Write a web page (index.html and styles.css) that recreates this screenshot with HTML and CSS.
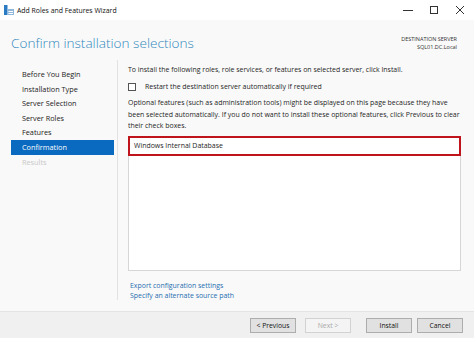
FILE: index.html
```html
<!DOCTYPE html>
<html>
<head>
<meta charset="utf-8">
<link rel="stylesheet" href="styles.css">
</head>
<body>
<div class="window">
  <div class="titlebar">
    <svg class="appicon" width="10" height="10" viewBox="0 0 10 10">
      <rect x="0" y="0" width="3.5" height="10" fill="#2a7bc4"/>
      <rect x="3.5" y="4" width="6.5" height="6" fill="#8fb7dc"/>
      <rect x="4.5" y="6" width="4.5" height="1" fill="#ffffff"/>
      <rect x="4.5" y="8" width="4.5" height="1" fill="#ffffff"/>
    </svg>
    <span class="title">Add Roles and Features Wizard</span>
    <div class="controls">
      <svg width="10" height="10" viewBox="0 0 10 10"><line x1="0" y1="5.5" x2="10" y2="5.5" stroke="#333" stroke-width="1"/></svg>
      <svg width="10" height="10" viewBox="0 0 10 10"><rect x="1.5" y="1.5" width="7" height="7" fill="none" stroke="#333" stroke-width="1"/></svg>
      <svg width="10" height="10" viewBox="0 0 10 10"><path d="M1 1 L9 9 M9 1 L1 9" stroke="#333" stroke-width="1"/></svg>
    </div>
  </div>
  <div class="header">
    <h1 class="heading">Confirm installation selections</h1>
    <div class="dest">
      <div>DESTINATION SERVER</div>
      <div>SQL01.DC.Local</div>
    </div>
  </div>
  <div class="main">
    <nav class="nav">
      <div class="navitem">Before You Begin</div>
      <div class="navitem">Installation Type</div>
      <div class="navitem">Server Selection</div>
      <div class="navitem">Server Roles</div>
      <div class="navitem">Features</div>
      <div class="navitem active">Confirmation</div>
      <div class="navitem disabled">Results</div>
    </nav>
    <div class="content">
      <p class="intro">To install the following roles, role services, or features on selected server, click Install.</p>
      <label class="check"><span class="box"></span>Restart the destination server automatically if required</label>
      <p class="note">Optional features (such as administration tools) might be displayed on this page because they have been selected automatically. If you do not want to install these optional features, click Previous to clear their check boxes.</p>
      <div class="list">
        <div class="item">Windows Internal Database</div>
      </div>
      <div class="links">
        <a>Export configuration settings</a>
        <a>Specify an alternate source path</a>
      </div>
    </div>
  </div>
  <div class="footer">
    <button class="btn">&lt; Previous</button>
    <button class="btn" disabled>Next &gt;</button>
    <button class="btn gap">Install</button>
    <button class="btn">Cancel</button>
  </div>
</div>
</body>
</html>
```
FILE: styles.css
```css
* { box-sizing: border-box; }
html, body { margin: 0; padding: 0; }
body {
  width: 474px;
  height: 338px;
  overflow: hidden;
  font-family: "Open Sans", "Noto Sans", sans-serif;
  color: #1e1e1e;
  background: #f9f9f9;
}
.window {
  width: 474px;
  height: 338px;
  display: flex;
  flex-direction: column;
}
.titlebar {
  height: 20px;
  background: #ffffff;
  display: flex;
  align-items: center;
  padding-left: 4px;
}
.appicon { margin-right: 3px; }
.title { font-size: 6.9px; color: #111; }
.controls {
  margin-left: auto;
  display: flex;
  gap: 16px;
  padding-right: 9px;
}
.header {
  height: 40px;
  display: flex;
  align-items: flex-start;
  padding: 12px 17px 0 11px;
}
.heading {
  margin: 0;
  font-weight: 300;
  font-size: 13.6px;
  color: #3289bd;
  line-height: 22px;
}
.dest {
  margin-left: auto;
  text-align: right;
  font-size: 5.5px;
  line-height: 8px;
  color: #333;
  padding-top: 3px;
}
.main {
  flex: 1;
  display: flex;
}
.nav {
  width: 118px;
  padding: 7px 0 0 11px;
  border-right: 1px solid #e2e2e2;
  margin-bottom: 11px;
}
.navitem {
  height: 14.6px;
  line-height: 14.6px;
  font-size: 7.3px;
  padding-left: 11px;
  color: #222;
  margin-right: 3px;
}
.navitem.active { background: #0a6ac0; color: #fff; }
.navitem.disabled { color: #c8c8c8; }
.content {
  flex: 1;
  padding: 4px 13px 0 10px;
  font-size: 6.95px;
}
.intro { margin: 0; line-height: 11px; }
.check {
  display: flex;
  align-items: center;
  margin-top: 7px;
  line-height: 10px;
}
.box {
  width: 8px; height: 8px;
  border: 1px solid #555;
  background: #fff;
  margin-right: 9px;
}
.note { margin: 5px 0 0 0; line-height: 11.5px; }
.list {
  margin-top: 4px;
  height: 135px;
  background: #fff;
  border: 1px solid #d6d6d6;
}
.item {
  height: 20px;
  border: 2px solid #c0141d;
  margin: -1px -1px 0 -1px;
  line-height: 16px;
  padding-left: 4px;
}
.links {
  margin-top: 10px;
  display: flex;
  flex-direction: column;
  line-height: 10px;
  padding-left: 2px;
}
.links a { color: #1f6fb0; }
.footer {
  height: 27px;
  background: #f0f0f0;
  border-top: 1px solid #e4e4e4;
  display: flex;
  align-items: center;
  justify-content: flex-end;
  padding-right: 11px;
  gap: 9px;
}
.btn {
  width: 46px;
  height: 15px;
  font-family: inherit;
  font-size: 6.8px;
  background: #e1e1e1;
  border: 1px solid #adadad;
  color: #111;
  padding: 0;
}
.btn:disabled { background: #f4f4f4; color: #a8a8a8; border-color: #d2d2d2; }
.btn.gap { margin-left: 6px; }
.btn.gap + .btn { margin-left: -4px; }
```
